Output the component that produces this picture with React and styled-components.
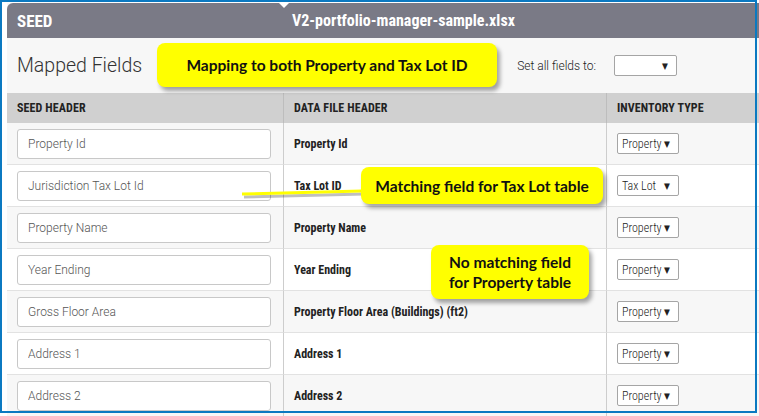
import React from 'react';
import styled, { createGlobalStyle } from 'styled-components';

const GlobalStyle = createGlobalStyle`
  html, body {
    margin: 0;
    padding: 0;
    background: #fff;
  }
  body {
    font-family: "Roboto Condensed", "DejaVu Sans Condensed", sans-serif;
    color: #222;
  }
`;

const Stage = styled.div`
  position: relative;
  width: 759px;
  height: 416px;
  overflow: hidden;
  background: #fff;
`;

// blue annotation frame drawn over the screenshot
const Frame = styled.div`
  position: absolute;
  left: 0;
  top: 0;
  width: 753px;
  height: 409px;
  border: 2px solid #0b79c1;
  pointer-events: none;
`;

const Panel = styled.section`
  margin: 3px 0 0 7px;
  width: 760px;
  background: #f7f7f7;
`;

const TopBar = styled.header`
  position: relative;
  display: grid;
  grid-template-columns: 276px 1fr;
  align-items: center;
  height: 35px;
  background: #7a7a86;
  border-top-left-radius: 6px;
  color: #fff;
  font-weight: bold;
`;

const Notch = styled.span`
  position: absolute;
  left: 272px;
  top: 0;
  width: 0;
  height: 0;
  border-left: 5px solid transparent;
  border-right: 5px solid transparent;
  border-top: 5px solid #fff;
`;

const Brand = styled.div`
  padding-left: 10px;
  font-size: 17px;
`;

const FileName = styled.div`
  padding-left: 9px;
  font-size: 16px;
`;

const Toolbar = styled.div`
  display: grid;
  grid-template-columns: 276px 323px 1fr;
  align-items: center;
  height: 55px;
`;

const Title = styled.h2`
  margin: 0;
  padding-left: 10px;
  font-family: Roboto, sans-serif;
  font-size: 19.5px;
  font-weight: 300;
  color: #333;
`;

const SetAllLabel = styled.div`
  text-align: right;
  padding-right: 10px;
  font-family: Roboto, sans-serif;
  font-size: 12px;
  font-weight: 300;
  color: #222;
`;

const SelectBox = styled.div`
  display: flex;
  align-items: center;
  justify-content: space-between;
  box-sizing: border-box;
  width: ${p => p.$width}px;
  height: ${p => p.$height}px;
  margin-left: ${p => p.$offset}px;
  padding: 0 8px 0 4px;
  background: #fff;
  border: 1px solid #a5a5a5;
  border-radius: 2px;
`;

const SelectText = styled.span`
  font-size: 12px;
  font-weight: 300;
  color: #222;
`;

const Caret = styled.span`
  font-size: 8.5px;
  color: #222;
`;

const Grid = styled.div`
  display: grid;
  grid-template-columns: 276px 323px 1fr;
`;

const HeadCell = styled.div`
  display: flex;
  align-items: center;
  height: 30px;
  padding-left: 10px;
  background: #d0d0d0;
  border-left: ${p => (p.$first ? 'none' : '1px solid #bdbdbd')};
  font-size: 12px;
  font-weight: bold;
  letter-spacing: 0.1px;
  text-transform: uppercase;
  color: #222;
`;

const Cell = styled.div`
  display: flex;
  align-items: center;
  box-sizing: border-box;
  height: 42px;
  padding-left: 10px;
  background: ${p => (p.$odd ? '#fff' : '#f7f7f7')};
  border-bottom: 1px solid #e2e2e2;
  border-left: ${p => (p.$first ? 'none' : '1px solid #cdcdcd')};
  font-size: 12px;
  font-weight: bold;
  color: #222;
`;

const FieldInput = styled.input`
  box-sizing: border-box;
  width: 254px;
  height: 30px;
  padding: 0 10px;
  background: #fff;
  border: 1px solid #c8c8c8;
  border-radius: 3px;
  font-family: Roboto, sans-serif;
  font-size: 12px;
  font-weight: 300;
  color: #555;
  &::placeholder {
    color: #555;
  }
`;

const Callout = styled.div`
  position: absolute;
  left: ${p => p.$x}px;
  top: ${p => p.$y}px;
  width: ${p => p.$w}px;
  height: ${p => p.$h}px;
  display: flex;
  align-items: center;
  justify-content: center;
  text-align: center;
  box-sizing: border-box;
  background: #ffff00;
  border-radius: 8px;
  box-shadow: 3px 4px 4px rgba(0, 0, 0, 0.35);
  font-family: Lato, "Open Sans", sans-serif;
  font-weight: bold;
  font-size: 15.5px;
  line-height: 20px;
  color: #111;
`;

const Connector = styled.svg`
  position: absolute;
  left: 240px;
  top: 186px;
  overflow: visible;
`;

const rows = [
  { seed: 'Property Id', file: 'Property Id', type: 'Property' },
  { seed: 'Jurisdiction Tax Lot Id', file: 'Tax Lot ID', type: 'Tax Lot' },
  { seed: 'Property Name', file: 'Property Name', type: 'Property' },
  { seed: 'Year Ending', file: 'Year Ending', type: 'Property' },
  { seed: 'Gross Floor Area', file: 'Property Floor Area (Buildings) (ft2)', type: 'Property' },
  { seed: 'Address 1', file: 'Address 1', type: 'Property' },
  { seed: 'Address 2', file: 'Address 2', type: 'Property' },
];

export default function App() {
  return (
    <>
      <GlobalStyle />
      <Stage>
        <Panel>
          <TopBar>
            <Notch />
            <Brand>SEED</Brand>
            <FileName>V2-portfolio-manager-sample.xlsx</FileName>
          </TopBar>
          <Toolbar>
            <Title>Mapped Fields</Title>
            <SetAllLabel>Set all fields to:</SetAllLabel>
            <SelectBox $width={63} $height={21} $offset={8}>
              <span />
              <Caret>▼</Caret>
            </SelectBox>
          </Toolbar>
          <Grid>
            <HeadCell $first>Seed Header</HeadCell>
            <HeadCell>Data File Header</HeadCell>
            <HeadCell>Inventory Type</HeadCell>
            {rows.map((r, i) => (
              <React.Fragment key={r.seed}>
                <Cell $first $odd={i % 2 === 1}>
                  <FieldInput placeholder={r.seed} readOnly />
                </Cell>
                <Cell $odd={i % 2 === 1}>{r.file}</Cell>
                <Cell $odd={i % 2 === 1}>
                  <SelectBox $width={62} $height={21} $offset={0}>
                    <SelectText>{r.type}</SelectText>
                    <Caret>▼</Caret>
                  </SelectBox>
                </Cell>
              </React.Fragment>
            ))}
          </Grid>
        </Panel>

        <Callout $x={157} $y={43} $w={340} $h={44}>
          Mapping to both Property and Tax Lot ID
        </Callout>

        <Connector width="125" height="12">
          <path d="M2 8 L122 5" stroke="rgba(0,0,0,0.25)" strokeWidth="3" transform="translate(2,3)" />
          <path d="M2 8 L122 5" stroke="#ffff00" strokeWidth="3" />
        </Connector>
        <Callout $x={361} $y={167} $w={242} $h={37}>
          Matching field for Tax Lot table
        </Callout>

        <Callout $x={431} $y={245} $w={158} $h={54}>
          No matching field
          <br />
          for Property table
        </Callout>

        <Frame />
      </Stage>
    </>
  );
}
